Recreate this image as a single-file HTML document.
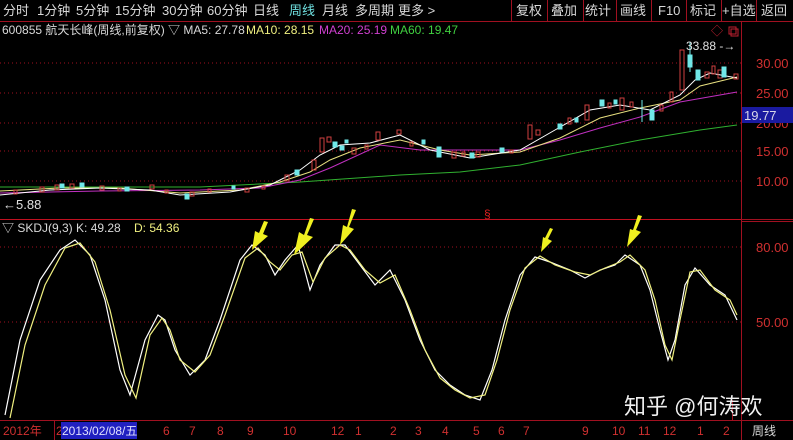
<!DOCTYPE html>
<html><head><meta charset="utf-8"><style>
body{margin:0;width:793px;height:440px;background:#000;overflow:hidden;font-family:"Liberation Sans","Noto Sans CJK SC",sans-serif;position:relative}
</style></head><body>
<svg width="793" height="440" style="position:absolute;left:0;top:0" font-family="Liberation Sans, Noto Sans CJK SC, sans-serif">
<g font-size="13" fill="#d8d8d8">
<text x="3" y="15">分时</text><text x="37" y="15">1分钟</text><text x="76" y="15">5分钟</text><text x="115" y="15">15分钟</text><text x="162" y="15">30分钟</text><text x="207" y="15">60分钟</text><text x="253" y="15">日线</text><text x="289" y="15" fill="#6fe0e0">周线</text><text x="322" y="15">月线</text><text x="355" y="15">多周期</text><text x="398" y="15">更多 ></text>
<text x="516" y="15">复权</text><text x="551" y="15">叠加</text><text x="585" y="15">统计</text><text x="620" y="15">画线</text><text x="658" y="15">F10</text><text x="690" y="15">标记</text><text x="722" y="15">+自选</text><text x="761" y="15">返回</text>
</g>
<g stroke="#a01020" stroke-width="1">
<line x1="0" y1="21.5" x2="793" y2="21.5"/>
<line x1="511.5" y1="0" x2="511.5" y2="21"/><line x1="547.5" y1="0" x2="547.5" y2="21"/><line x1="583.5" y1="0" x2="583.5" y2="21"/><line x1="616.5" y1="0" x2="616.5" y2="21"/><line x1="651.5" y1="0" x2="651.5" y2="21"/><line x1="686.5" y1="0" x2="686.5" y2="21"/><line x1="721.5" y1="0" x2="721.5" y2="21"/><line x1="756.5" y1="0" x2="756.5" y2="21"/>
<line x1="741.5" y1="21" x2="741.5" y2="440"/>
<line x1="0" y1="219.5" x2="741" y2="219.5" stroke="#c01020"/>
<line x1="741" y1="219.5" x2="793" y2="219.5"/>
<line x1="0" y1="420.5" x2="793" y2="420.5"/>
<line x1="741" y1="221.5" x2="793" y2="221.5"/>
</g>
<g stroke="#a01020" stroke-dasharray="1,3">
<line x1="0" y1="63" x2="741" y2="63"/><line x1="0" y1="93" x2="741" y2="93"/><line x1="0" y1="123" x2="741" y2="123"/><line x1="0" y1="151" x2="741" y2="151"/><line x1="0" y1="181" x2="741" y2="181"/>
<line x1="0" y1="247" x2="741" y2="247"/><line x1="0" y1="322" x2="741" y2="322"/>
</g>
<g font-size="12">
<text x="2" y="34" fill="#d8d8d8">600855 航天长峰(周线,前复权) ▽ MA5: 27.78</text>
<text x="246" y="34" fill="#f0f080">MA10: 28.15</text>
<text x="319" y="34" fill="#d040d0">MA20: 25.19</text>
<text x="390" y="34" fill="#40d040">MA60: 19.47</text>
<text x="2" y="232" fill="#d8d8d8">▽ SKDJ(9,3)  K: 49.28</text>
<text x="134" y="232" fill="#f0f080">D: 54.36</text>
</g>
<text x="711" y="35" fill="#c02030" font-size="12">◇</text>
<rect x="729" y="27" width="7" height="7" fill="none" stroke="#c02030"/><rect x="731" y="29" width="7" height="7" fill="none" stroke="#c02030"/>
<g font-size="13" fill="#d03030">
<text x="756" y="68">30.00</text><text x="756" y="98">25.00</text><text x="756" y="128">20.00</text><text x="756" y="156">15.00</text><text x="756" y="186">10.00</text>
<text x="756" y="252">80.00</text><text x="756" y="327">50.00</text>
</g>
<rect x="742" y="107" width="51" height="16" fill="#1a1aa0"/>
<text x="744" y="120" font-size="13" fill="#d8d8e8">19.77</text>
<polyline fill="none" stroke="#30b030" points="0,187 100,187 200,187 300,182 400,175 460,172 520,165 580,152 640,140 700,130 737,125"/>
<polyline fill="none" stroke="#c030c0" points="0,193 100,191 200,190 260,188 300,180 330,168 380,145 420,150 470,150 520,150 560,140 600,128 640,117 680,102 737,92"/>
<polyline fill="none" stroke="#e8e080" points="0,191 60,188 120,188 180,193 240,190 280,182 310,172 330,160 360,148 400,140 440,150 470,155 520,152 560,138 600,118 640,108 680,100 700,86 737,77"/>
<polyline fill="none" stroke="#ffffff" points="0,195 50,190 100,188 150,190 180,195 230,192 270,185 300,170 320,155 340,145 370,143 400,135 430,150 470,158 520,150 555,130 590,110 620,105 650,110 680,95 695,80 710,73 737,78"/>
<g stroke="#d04040" fill="none">
<rect x="40" y="187" width="4" height="5"/><rect x="55" y="185" width="4" height="5"/><rect x="70" y="184" width="4" height="4"/><rect x="100" y="186" width="4" height="4"/><rect x="150" y="185" width="4" height="4"/><rect x="190" y="192" width="4" height="4"/><rect x="245" y="188" width="4" height="4"/><rect x="285" y="175" width="4" height="6"/><rect x="312" y="160" width="4" height="10"/><rect x="320" y="138" width="4" height="14"/><rect x="327" y="137" width="4" height="5"/><rect x="352" y="148" width="4" height="6"/><rect x="376" y="132" width="4" height="8"/><rect x="397" y="130" width="4" height="4"/><rect x="452" y="152" width="4" height="6"/><rect x="476" y="152" width="4" height="5"/><rect x="528" y="125" width="4" height="14"/><rect x="536" y="130" width="4" height="5"/><rect x="585" y="105" width="4" height="15"/><rect x="620" y="98" width="4" height="12"/><rect x="680" y="50" width="4" height="40"/><rect x="705" y="72" width="4" height="6"/><rect x="718" y="70" width="4" height="8"/><rect x="734" y="74" width="4" height="5"/>
<rect x="14" y="190" width="3" height="4"/><rect x="118" y="188" width="3" height="3"/><rect x="165" y="190" width="3" height="3"/><rect x="208" y="189" width="3" height="3"/><rect x="262" y="186" width="3" height="3"/><rect x="365" y="145" width="3" height="4"/><rect x="410" y="142" width="3" height="4"/><rect x="462" y="152" width="3" height="4"/><rect x="510" y="150" width="3" height="3"/><rect x="568" y="118" width="3" height="6"/><rect x="608" y="103" width="3" height="5"/><rect x="630" y="102" width="3" height="5"/><rect x="660" y="105" width="3" height="6"/><rect x="670" y="92" width="3" height="10"/><rect x="712" y="66" width="3" height="8"/>
</g>
<g fill="#70e8e8" stroke="#70e8e8">
<rect x="60" y="184" width="4" height="4"/><rect x="80" y="183" width="4" height="4"/><rect x="125" y="187" width="4" height="4"/><rect x="185" y="194" width="4" height="5"/><rect x="295" y="170" width="4" height="5"/><rect x="333" y="142" width="4" height="5"/><rect x="340" y="146" width="4" height="4"/><rect x="437" y="147" width="4" height="10"/><rect x="470" y="153" width="4" height="5"/><rect x="500" y="148" width="4" height="4"/><rect x="558" y="124" width="4" height="5"/><rect x="600" y="100" width="4" height="6"/><rect x="650" y="110" width="4" height="10"/><rect x="688" y="55" width="4" height="12"/><rect x="696" y="70" width="4" height="10"/><rect x="722" y="67" width="4" height="10"/>
<rect x="232" y="186" width="3" height="3"/><rect x="345" y="140" width="3" height="3"/><rect x="422" y="140" width="3" height="4"/><rect x="575" y="118" width="3" height="4"/><rect x="614" y="100" width="3" height="4"/>
<line x1="690" y1="42" x2="690" y2="72"/><line x1="642" y1="100" x2="642" y2="122"/>
</g>
<text x="686" y="50" font-size="12" fill="#e0e0e0">33.88 -→</text>
<text x="3" y="209" font-size="13" fill="#e0e0e0">←5.88</text>
<text x="484" y="218" font-size="12" fill="#e02020">§</text>
<polyline fill="none" stroke="#ffffff" stroke-width="1.2" points="5,415 20,340 40,280 60,250 75,240 90,255 105,300 120,370 130,395 145,340 158,315 165,320 175,350 190,375 205,360 220,320 240,260 252,245 265,255 275,275 285,260 298,245 310,290 320,265 335,245 345,245 360,265 375,285 390,270 405,300 420,340 435,370 450,385 465,395 480,400 492,370 505,320 520,275 535,257 550,262 570,270 585,278 600,270 615,265 625,255 640,265 650,290 660,330 668,360 675,340 685,285 695,268 710,285 725,295 737,320"/>
<polyline fill="none" stroke="#f0f080" stroke-width="1.2" points="10,418 25,345 45,285 65,248 80,243 95,262 110,310 125,375 136,398 150,335 162,318 170,330 180,360 195,372 210,355 225,315 245,258 258,248 270,262 280,270 292,255 302,252 313,282 325,258 340,245 350,250 365,270 380,283 395,275 410,310 425,350 440,378 455,390 470,398 485,395 497,360 510,310 525,268 540,256 555,265 575,272 590,275 605,268 620,262 630,255 645,270 655,300 665,345 672,360 680,320 690,272 700,270 715,290 730,300 737,315"/>
<g fill="#f0f020">
<polygon points="268,222 263,234 268,236 252,250 255,231 259,233 264,221"/>
<polygon points="314,219 307,235 313,237 294,255 299,232 304,235 310,218"/>
<polygon points="356,210 349,227 354,229 340,245 343,225 347,227 352,209"/>
<polygon points="553,229 548,239 552,241 541,252 543,237 545,238 550,228"/>
<polygon points="642,216 636,230 641,232 627,247 630,229 633,230 638,215"/>
</g>
<g font-size="12" fill="#d03030">
<text x="3" y="435">2012年</text><text x="56" y="435">2</text>
<text x="163" y="435">6</text><text x="189" y="435">7</text><text x="217" y="435">8</text><text x="247" y="435">9</text><text x="283" y="435">10</text><text x="331" y="435">12</text><text x="355" y="435">1</text><text x="390" y="435">2</text><text x="415" y="435">3</text><text x="442" y="435">4</text><text x="473" y="435">5</text><text x="498" y="435">6</text><text x="523" y="435">7</text><text x="582" y="435">9</text><text x="612" y="435">10</text><text x="638" y="435">11</text><text x="663" y="435">12</text><text x="697" y="435">1</text><text x="723" y="435">2</text>
</g>
<rect x="61" y="422" width="76" height="17" fill="#2020c0"/>
<text x="62" y="435" font-size="12" fill="#e0e0ff">2013/02/08/五</text>
<text x="752" y="435" font-size="12" fill="#d8d8d8">周线</text>
<g stroke="#a01020"><line x1="54.5" y1="421" x2="54.5" y2="440"/><line x1="732.5" y1="400" x2="732.5" y2="420"/></g>
<text x="624" y="414" font-size="22" fill="#f0f0f0">知乎 @何涛欢</text>
</svg>
</body></html>
